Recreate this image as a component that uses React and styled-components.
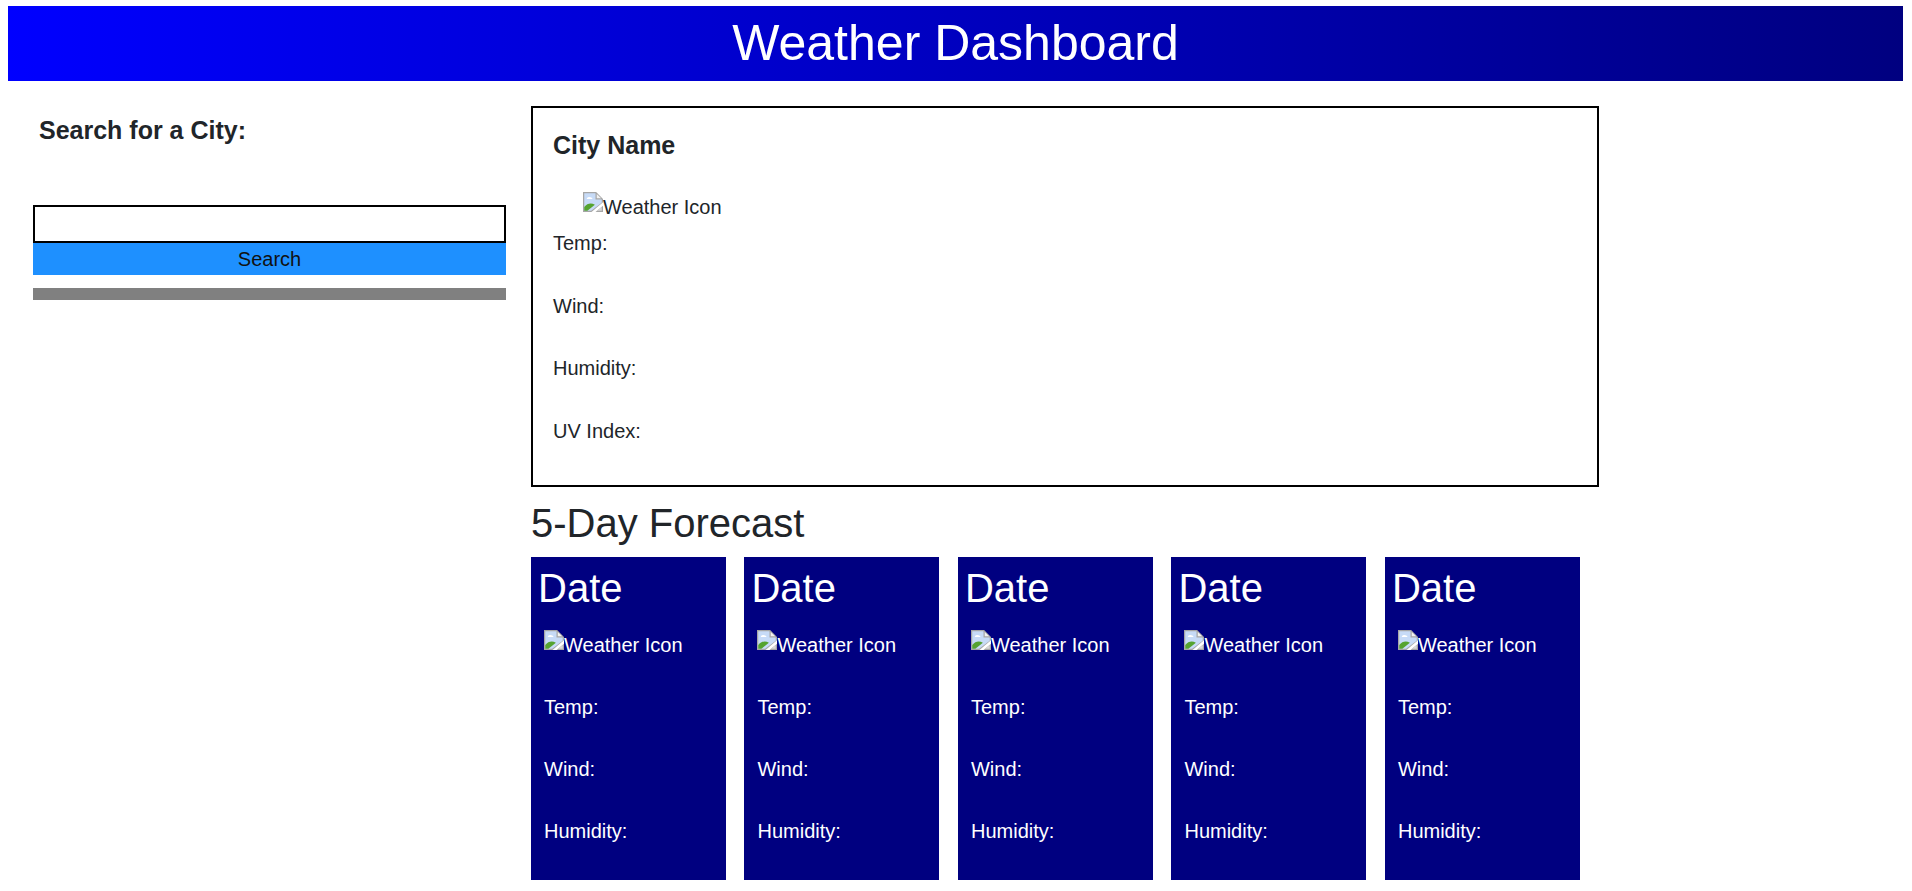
import React from 'react';
import styled, { createGlobalStyle } from 'styled-components';

const GlobalStyle = createGlobalStyle`
  * {
    box-sizing: border-box;
  }

  body {
    margin: 6px 9px 0 8px;
    background-color: #fff;
    color: #212529;
    font-family: 'Liberation Sans', Arial, sans-serif;
    font-size: 20px;
    line-height: 1.5;
  }
`;

const Header = styled.header`
  height: 75px;
  display: flex;
  align-items: center;
  justify-content: center;
  background: linear-gradient(to right, #0000ff, #000080);
  color: #fff;
  font-size: 50px;
`;

const Main = styled.main`
  display: grid;
  grid-template-columns: 473px 1068px;
  column-gap: 25px;
  padding: 25px 0 0 25px;
`;

const SearchPanel = styled.aside`
  display: flex;
  flex-direction: column;
`;

const SearchTitle = styled.h2`
  margin: 0 0 60px 6px;
  padding-top: 9px;
  font-size: 25px;
  font-weight: 700;
  line-height: 1.2;
`;

const SearchInput = styled.input`
  height: 38px;
  width: 100%;
  border: 2px solid #000;
  background: #fff;
  outline: none;
`;

const SearchButton = styled.button`
  height: 32px;
  width: 100%;
  padding: 0;
  border: none;
  background: #1e90ff;
  color: #111;
  font-family: inherit;
  font-size: 20px;
`;

const HistoryBar = styled.div`
  height: 12px;
  margin-top: 13px;
  background: #808080;
`;

const Results = styled.section`
  display: flex;
  flex-direction: column;
`;

const CurrentCard = styled.div`
  height: 381px;
  border: 2px solid #000;
  padding: 22px 20px 0;
`;

const CityName = styled.h3`
  margin: 0 0 32px;
  font-size: 25px;
  font-weight: 700;
  line-height: 1.2;
`;

const IconAlt = styled.div`
  display: flex;
  align-items: flex-start;
  height: 36px;
  margin-left: ${(props) => props.$indent}px;
  line-height: 30px;

  svg {
    flex: none;
  }
`;

const Stat = styled.p`
  margin: 0 0 32.7px;
  line-height: 30px;
`;

const ForecastTitle = styled.h2`
  margin: 12px 0 10px;
  font-size: 40px;
  font-weight: 400;
  line-height: 1.2;
`;

const ForecastRow = styled.div`
  display: flex;
  gap: 18.7px;
`;

const ForecastCard = styled.div`
  width: 194.8px;
  height: 323px;
  padding: 7px 7px 0;
  background: #000080;
  color: #fff;
`;

const DateTitle = styled.h3`
  margin: 0 0 18px;
  font-size: 40px;
  font-weight: 400;
  line-height: 1.2;
`;

const CardBody = styled.div`
  display: flex;
  flex-direction: column;
  padding-left: 6px;

  ${IconAlt} {
    height: 30px;
    margin-bottom: 32px;
  }

  ${Stat} {
    margin: 0 0 32px;
  }
`;

// Chrome's broken image glyph
const BrokenImage = () => (
  <svg width="20" height="20" viewBox="0 0 16 16">
    <path d="M0 0H10.5L16 5.5V16H0Z" fill="#a6a6a6" />
    <path d="M1 1H10V6H15V8.5L6.5 15H1Z" fill="#c7dbf7" />
    <path d="M3 5.5C3.3 4.2 4.6 3.6 5.6 4.2C6.4 3.9 7.4 4.6 7.6 5.5Z" fill="#fff" />
    <path d="M1 15V12C3.5 9 6.5 8.5 9.5 10.2L3.5 15Z" fill="#55a32f" />
    <path d="M16 8.2L6.8 16H10L16 11Z" fill="#fff" />
    <path d="M11 1.5L14.5 5H11Z" fill="#f2f2f2" />
    <path d="M15 12V15H11Z" fill="#d9d9d9" />
  </svg>
);

const WeatherIcon = ({ indent = 0 }) => (
  <IconAlt $indent={indent}>
    <BrokenImage />
    <span>Weather Icon</span>
  </IconAlt>
);

const days = [1, 2, 3, 4, 5];

const App = () => {
  return (
    <>
      <GlobalStyle />
      <Header>Weather Dashboard</Header>
      <Main>
        <SearchPanel>
          <SearchTitle>Search for a City:</SearchTitle>
          <SearchInput type="text" />
          <SearchButton>Search</SearchButton>
          <HistoryBar />
        </SearchPanel>
        <Results>
          <CurrentCard>
            <CityName>City Name</CityName>
            <WeatherIcon indent={30} />
            <Stat>Temp:</Stat>
            <Stat>Wind:</Stat>
            <Stat>Humidity:</Stat>
            <Stat>UV Index:</Stat>
          </CurrentCard>
          <ForecastTitle>5-Day Forecast</ForecastTitle>
          <ForecastRow>
            {days.map((day) => (
              <ForecastCard key={day}>
                <DateTitle>Date</DateTitle>
                <CardBody>
                  <WeatherIcon />
                  <Stat>Temp:</Stat>
                  <Stat>Wind:</Stat>
                  <Stat>Humidity:</Stat>
                </CardBody>
              </ForecastCard>
            ))}
          </ForecastRow>
        </Results>
      </Main>
    </>
  );
};

export default App;
